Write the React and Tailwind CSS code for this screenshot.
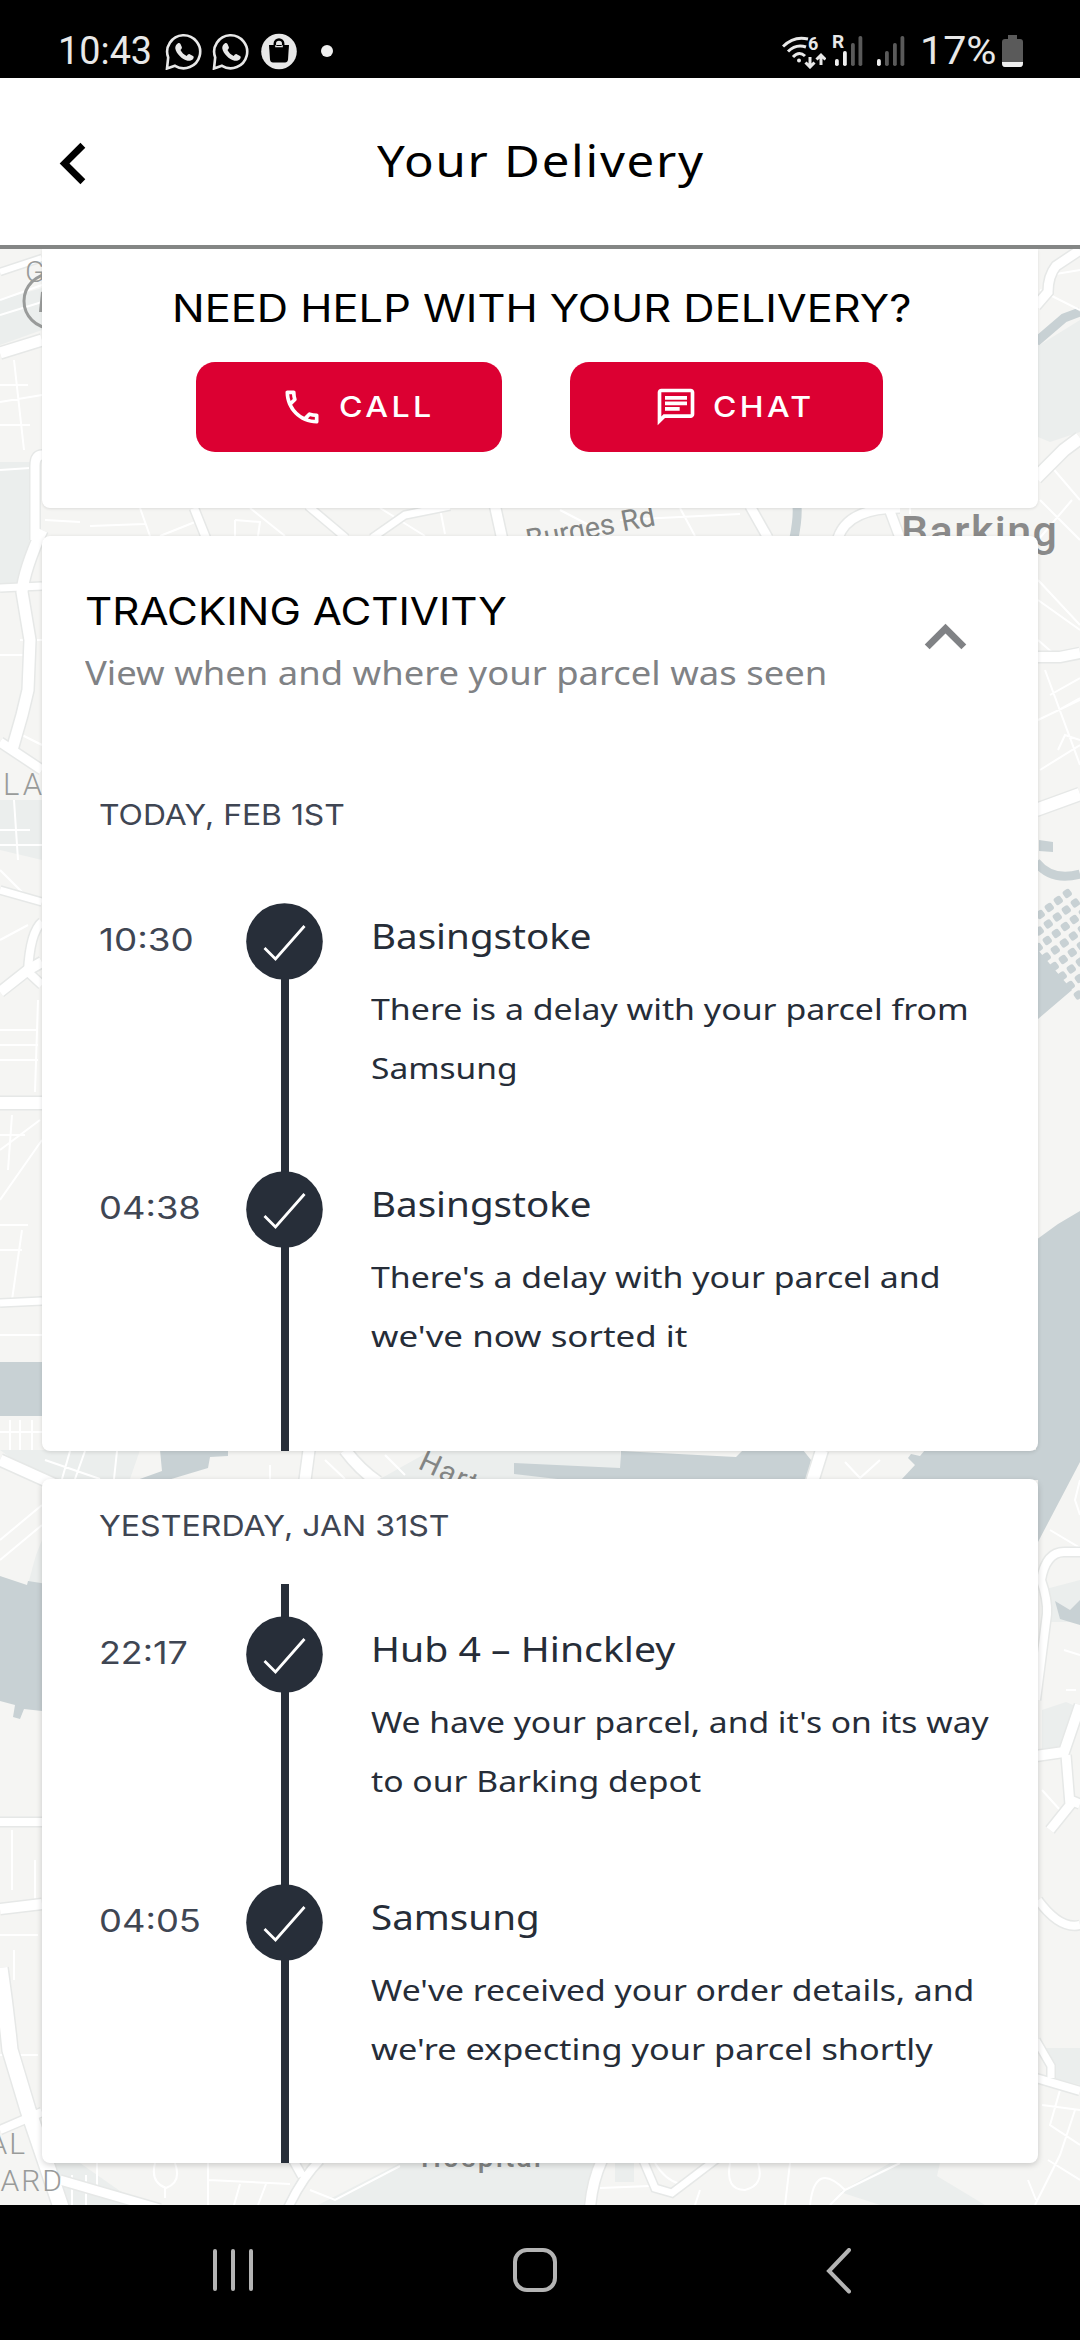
import { useLayoutEffect, useRef, useState } from "react";
import {
  MdKeyboardArrowLeft,
  MdKeyboardArrowUp,
  MdOutlineCall,
  MdOutlineChat,
} from "react-icons/md";

// A single line of text, widened or narrowed to the given width.
function Fit({ width, className = "", children }) {
  const ref = useRef(null);
  const [scale, setScale] = useState(1);
  useLayoutEffect(() => {
    setScale(width / ref.current.offsetWidth);
  }, [width]);
  return (
    <span
      ref={ref}
      className={"inline-block shrink-0 origin-left whitespace-nowrap " + className}
      style={{ transform: `scaleX(${scale})` }}
    >
      {children}
    </span>
  );
}

function SignalBars({ lit }) {
  return (
    <svg width="28" height="32" viewBox="0 0 28 32" className="shrink-0">
      {[
        [0, 24],
        [8, 16],
        [16, 8],
        [23.5, 1],
      ].map(([x, y], i) => (
        <rect key={x} x={x} y={y} width="3.8" height={31 - y} rx="1.8" fill={i < lit ? "#f0f0f0" : "#5a5a5a"} />
      ))}
    </svg>
  );
}

function StatusBar() {
  return (
    <div className="relative z-10 flex h-[78px] w-full items-start justify-between bg-black pt-8 text-[#e8e8e8]">
      <div className="flex h-[38px] items-center pl-[58px]">
        <div className="flex w-[107px] text-[39px] leading-[38px]">
          <Fit width={94} className="font-['Roboto',sans-serif]">10:43</Fit>
        </div>
        <WhatsAppIcon />
        <div className="w-[9px]" />
        <WhatsAppIcon />
        <svg width="38" height="38" viewBox="0 0 38 38" className="ml-2.5">
          <circle cx="19" cy="19.5" r="17.8" fill="#e8e8e8" />
          <path d="M9 13h20l-1 14.500q-.3 3-3 3H13q-2.700 0-3-3Z" fill="#000" />
          <path d="M14.800 14v-2.500a4.200 4 0 0 1 8.400 0V14" fill="none" stroke="#000" strokeWidth="2.500" />
          <path d="M15.800 13.200v1.500h6.400v-1.500" fill="none" stroke="#e8e8e8" strokeWidth="1.200" />
        </svg>
        <div className="ml-[23px] size-3 rounded-full bg-[#f0f0f0]" />
      </div>
      <div className="flex h-[38px] items-center pr-[57px]">
        <svg width="44" height="36" viewBox="0 0 44 36" fill="none" stroke="#e8e8e8" strokeWidth="3">
          <path d="M1 13.500Q12 2.500 26 6" />
          <path d="M6 18.500Q14 10.500 24 14" />
          <path d="M11 24Q17 17.500 23 23" />
          <circle cx="17" cy="27.500" r="2" fill="#e8e8e8" stroke="none" />
          <path d="M28 24v10m-4.500-4.500L28 34l4.500-4.500M39 32V22m-4.500 4.500L39 22l4.500 4.500" />
          <text x="26" y="17" fontSize="18" fontWeight="700" fontFamily="Roboto, sans-serif" fill="#e8e8e8" stroke="none">
            6
          </text>
        </svg>
        <div className="relative ml-[9px] flex h-8">
          <SignalBars lit={2} />
          <span className="absolute -left-[3px] -top-[1px] bg-black font-['Roboto',sans-serif] text-[19px] font-bold leading-[15px]">
            R
          </span>
        </div>
        <div className="ml-3.5 flex h-8">
          <SignalBars lit={1} />
        </div>
        <div className="ml-[15px] flex w-[82px] text-[39px] leading-[38px]">
          <Fit width={76} className="font-['Roboto',sans-serif]">17%</Fit>
        </div>
        <svg width="21" height="34" viewBox="0 0 21 34">
          <path d="M6 1h9v4h3q3 0 3 3v21q0 4-3 4H3q-3 0-3-4V8q0-3 3-3h3Z" fill="#5a5a5a" />
          <path d="M0 28h21v1q0 4-3 4H3q-3 0-3-4Z" fill="#f0f0f0" />
        </svg>
      </div>
    </div>
  );
}

function WhatsAppIcon() {
  return (
    <svg width="38" height="38" viewBox="0 0 38 38">
      <path d="M2 36.500l1.200-11A16.500 16.500 0 1 1 10 33.800Z" fill="none" stroke="#e8e8e8" strokeWidth="2.600" />
      <path
        d="M13 11.200c1-.6 2-.3 2.500.9l1.300 3c.4 1-.2 1.800-1.300 3 1.300 2.600 3.200 4.500 6.200 5.800 1-1.200 1.900-2.200 3-1.700l3.300 1.700c1 .6.800 1.800.2 2.800-1.200 1.800-3.600 2.500-5.700 2-5.500-1.400-11.200-6.800-12.200-12.200-.3-2.200.9-4.400 2.700-5.300Z"
        fill="#e8e8e8"
      />
    </svg>
  );
}

function Header() {
  return (
    <header className="relative z-10 flex h-[171px] w-full items-start border-b-4 border-[#848685] bg-white text-black">
      <MdKeyboardArrowLeft className="ml-[32px] mt-[44px] size-[83px]" />
      <h1 className="ml-[262px] mt-[53px] flex h-[60px] items-center text-[43px] leading-[60px] tracking-[1.5px]">
        <Fit width={328}>Your Delivery</Fit>
      </h1>
    </header>
  );
}

const roads = [
  ["M0 272 42 258", 6], ["M0 353 42 340", 11], ["M42 455Q35 455 35 466V540", 9],
  ["M42 530Q24 570 22 592L30 640 28 690 22 715 12 750", 11], ["M0 588 42 586", 7], ["M0 742 42 770", 9],
  ["M0 890 42 902", 7], ["M42 922Q30 932 28 972L42 985", 8], ["M0 992 28 970 42 962", 10],
  ["M0 1103H42", 12], ["M0 1303 42 1301", 7], ["M0 1460 60 1487", 11], ["M0 1822H42", 8],
  ["M0 1909 42 1904", 10], ["M0 1968Q6 2010 10 2050L28 2110 62 2210", 15], ["M0 2130 42 2112", 8],
  ["M60 2180 160 2209", 9], ["M194 508 206 538", 8], ["M308 506 346 538", 7], ["M372 538 405 515 450 506", 7],
  ["M495 506 502 538", 10], ["M750 506 768 538", 9], ["M838 538Q848 508 900 508", 9], ["M888 506 900 538", 9],
  ["M1080 250 1056 266Q1048 276 1048 292L1036 306", 9], ["M1036 478 1064 450 1080 438", 12],
  ["M1038 657H1060L1080 653", 10], ["M1036 810 1080 794", 12], ["M309 1450 305 1480", 11],
  ["M345 1450Q360 1470 378 1482", 11], ["M822 1450 812 1482", 12],
  ["M1080 1552H1064Q1046 1552 1041 1580 1048 1600 1047 1614L1036 1700", 8], ["M1036 1756 1064 1752 1080 1705", 10],
  ["M1066 1755 1070 1805 1050 1830M1070 1800 1080 1804", 9], ["M1036 2040 1051 2066V2078", 7], ["M1036 2078 1080 2091", 8],
  ["M292 2158 302 2176M320 2160Q302 2178 288 2208", 8], ["M602 2160Q592 2182 590 2208", 10],
  ["M643 2160 655 2188 672 2193 718 2158", 7], ["M1038 1900Q1060 1930 1080 1925", 8],
];

const lanes =
  "M0 300 42 285M0 315 42 302M14 360 24 450M0 385H28M0 402 42 395M0 425H30M0 470 30 468M20 640H42M0 655H24M22 735 42 745M0 830H30M0 845H42M14 800 18 860M0 870 30 900M0 940 28 925M0 1030H38M0 1045H38M0 1060H38M38 1000 35 1092M0 1135H25M0 1150 40 1120M12 1115 8 1170M0 1200 42 1140M0 1225H28M22 1230 12 1300M0 1250H22M0 1335H42M10 1420V1450M20 1420V1450M32 1420V1450M0 1432H42M0 1540 42 1505M0 1560 42 1525M12 1830V1890M35 1860V1900M0 1935H38M14 1950V1980M0 2055H38M42 508M45 520 80 522M90 526 145 524M140 508 150 536M160 536 200 520M235 520V536M235 520 260 522 258 536M250 508 285 536M380 508 425 536M440 508 445 534M560 510 610 536M680 508 695 536M620 520 740 514M910 508V514M1040 290 1080 310M1050 275 1080 270M1040 500 1080 540M1050 465 1080 500M1038 540 1072 500M1038 580 1080 625M1038 600 1080 630M1038 640 1055 655M1045 670 1080 765M1050 695 1080 678M1055 712 1080 698M1038 720 1080 700M1058 750 1065 735 1080 740M1040 770 1080 745M70 1451 62 1479M85 1451 75 1479M45 1460 100 1479M117 1451 114 1479M270 1465V1479M325 1460 345 1479M385 1455 405 1475M845 1462 860 1478 880 1460M1080 1480 1075 1500 1080 1515M1050 1530 1080 1548M1064 1650 1080 1655M1066 1690H1076M1042 1790 1060 1810M1042 2105 1080 2110M1060 2090 1050 2125 1080 2145M1075 2110 1060 2155 1035 2205M1048 2160 1080 2180M1028 2180 1036 2200M72 2175V2205M86 2175V2205M97 2163V2185M155 2163Q150 2182 166 2188 182 2182 175 2163M165 2188V2198M208 2163V2205M208 2180 290 2184M240 2184 234 2205M266 2184 258 2205M310 2190 335 2200 400 2166M600 2188 650 2186M655 2163Q665 2180 680 2184M700 2190 695 2205M730 2163Q725 2190 745 2190 765 2185 758 2163M790 2163 785 2205M810 2205Q815 2160 845 2190L900 2163M830 2205 845 2190";

// Grid of small tanks beside the river.
const tanks = [];
for (let r = 0; r < 9; r++) for (let c = 0; c < 6; c++) tanks.push([1067 - c * 9 + r * 8, 890 + c * 7 + r * 9.5]);

function MapBackground() {
  return (
    <svg className="absolute inset-0 size-full" viewBox="0 249 1080 1956" fontFamily="Roboto, sans-serif">
      <rect y="249" width="1080" height="1956" fill="#f5f5f3" />
      <g fill="#ebeeed">
        <path d="M0 462 30 462V540L22 588H0ZM0 300 42 288V330L0 345ZM1038 346 1080 320V432L1050 442 1038 437Z" />
        <path d="M0 800H42V860L0 850ZM0 1450H140L130 1479H40ZM430 1451H620V1479H380ZM1042 1590 1080 1580V1622H1048Z" />
        <path d="M36 1555 42 1540V1584H28ZM1042 1710 1066 1702 1080 1708 1066 1745 1042 1750ZM1042 2048H1080V2085L1052 2078Z" />
        <path d="M318 2205 400 2163H600L588 2205ZM840 2192 890 2163H940L937 2176 985 2205H880ZM615 2163H634V2182H615ZM45 2163H80L140 2205H60Z" />
      </g>
      <g fill="#c8d1d4">
        <path d="M0 1362H42V1416H0ZM0 1576 27 1585 28 1581 60 1586V1713L24 1709 20 1719 13 1717 15 1705 0 1701Z" />
        <path d="M160 1450 162 1471 137 1480H168L208 1468 210 1457 228 1456V1450Z" />
        <path d="M514 1463 620 1468 621 1451 736 1457 743 1450H803L811 1460 807 1480H566L514 1474Z" />
        <path d="M925 1450 920 1456 911 1454 908 1458 915 1465 901 1480H1038V1542L1080 1462V1211L1058 1224 1036 1240V1450Z" />
        <path d="M1038 950 1072 990 1038 1019ZM1039 840 1053 842V852L1039 851ZM1055 1601 1070 1610 1080 1600V1625L1060 1619Z" />
        {tanks.map(([x, y]) => (
          <rect key={x + "-" + y} x={x - 4} y={y - 0.5} width="8" height="8" rx="2.500" transform={`rotate(-35 ${x} ${y + 3})`} />
        ))}
      </g>
      <g fill="none" stroke="#c8d1d4" strokeWidth="9">
        <path d="M1036 342 1064 318 1080 312M1036 862Q1052 882 1080 874M797 506Q798 518 794 538" />
      </g>
      <path d={lanes} fill="none" stroke="#ffffff" strokeWidth="2" />
      {roads.map(([d, w]) => (
        <path key={d} d={d} fill="none" stroke="#e6e8e7" strokeWidth={w + 3} />
      ))}
      {roads.map(([d, w]) => (
        <path key={d} d={d} fill="none" stroke="#ffffff" strokeWidth={w} />
      ))}
      <g fill="#999b9a">
        <text x="25" y="282" fontSize="29" fontWeight="300">G</text>
        <circle cx="51" cy="301" r="27" fill="none" stroke="#999b9a" strokeWidth="3" />
        <path d="M39 312 41 292 46 290V312Z" />
        <text x="3" y="795" fontSize="31" fontWeight="300" letterSpacing="3">LA</text>
        <text x="27" y="2154" fontSize="30" fontWeight="300" letterSpacing="2" textAnchor="end">AL</text>
        <text x="64" y="2191" fontSize="30" fontWeight="300" letterSpacing="2" textAnchor="end">ARD</text>
      </g>
      <g fill="#838584">
        <text x="528" y="550" fontSize="29" textLength="131" transform="rotate(-11 528 550)">Burges Rd</text>
        <text x="901" y="546" fontSize="43" fontWeight="500" fill="#8a8a8a" textLength="156">Barking</text>
        <text x="417" y="1468" fontSize="29" letterSpacing="1.500" transform="rotate(25 417 1468)">Hartn</text>
        <text x="421" y="2167" fontSize="28" fontWeight="500" textLength="120">Hospital</text>
      </g>
    </svg>
  );
}

function ActionButton({ icon: Icon, label, labelWidth, className }) {
  return (
    <button className={"flex h-[90px] items-center rounded-[19px] bg-[#dc0032] text-white " + className}>
      <Icon className="size-[44px] shrink-0" />
      <span className="ml-[15px] flex font-['Inter',sans-serif] text-[28.5px] font-medium leading-[44px] tracking-[3px]">
        <Fit width={labelWidth}>{label}</Fit>
      </span>
    </button>
  );
}

function HelpCard() {
  return (
    <section className="h-[259px] rounded-b-lg bg-white pt-8 shadow-[0_1px_3px_rgba(0,0,0,0.1)]">
      <h2 className="flex h-[53px] pl-[130px] font-['Inter',sans-serif] text-[37.5px] leading-[56px] text-black">
        <Fit width={739}>NEED HELP WITH YOUR DELIVERY?</Fit>
      </h2>
      <div className="mt-7 flex pl-[154px]">
        <ActionButton icon={MdOutlineCall} label="CALL" labelWidth={96} className="w-[306px] pl-[84px]" />
        <ActionButton icon={MdOutlineChat} label="CHAT" labelWidth={101} className="ml-[68px] w-[313px] pl-[84px]" />
      </div>
    </section>
  );
}

function Event({ time, timeWidth, place, placeWidth, lines, first }) {
  return (
    <li className="flex h-[268px]">
      <div className="flex w-[147px] shrink-0 pt-[46px] font-['Inter',sans-serif] text-[31px] leading-[46px] text-[#3f4653]">
        <Fit width={timeWidth}>{time}</Fit>
      </div>
      <div className="flex w-[85px] shrink-0 flex-col">
        <div className={"-mb-px ml-[35px] h-[33px] w-2 shrink-0 " + (first ? "bg-transparent" : "bg-[#272e39]")} />
        <svg width="77" height="77" viewBox="0 0 77 77" className="shrink-0">
          <circle cx="38.500" cy="38.500" r="38.300" fill="#272e39" />
          <path d="M18.500 45 29.500 56 58.500 23" fill="none" stroke="#ffffff" strokeWidth="2.800" />
        </svg>
        <div className="-mt-0.5 ml-[35px] w-2 grow bg-[#272e39]" />
      </div>
      <div className="ml-10 text-[#262d38]">
        <h3 className="mt-10 flex h-[50px] text-[34px] leading-[50px]">
          <Fit width={placeWidth}>{place}</Fit>
        </h3>
        <div className="mt-[19px] text-[28.5px] leading-[59px]">
          {lines.map(([text, width]) => (
            <div key={text} className="flex h-[59px]">
              <Fit width={width}>{text}</Fit>
            </div>
          ))}
        </div>
      </div>
    </li>
  );
}

function Day({ label, labelWidth, labelClass, events, firstOpen }) {
  return (
    <div className="flex grow flex-col pl-[57px]">
      <div className={"flex h-11 font-['Inter',sans-serif] text-[29px] leading-[45px] text-[#3f4653] " + labelClass}>
        <Fit width={labelWidth}>{label}</Fit>
      </div>
      <ul>
        {events.map((e, i) => (
          <Event key={e.time} {...e} first={firstOpen && i === 0} />
        ))}
      </ul>
      <div className="ml-[182px] w-2 grow bg-[#272e39]" />
    </div>
  );
}

const today = [
  {
    time: "10:30", timeWidth: 95, place: "Basingstoke", placeWidth: 221,
    lines: [["There is a delay with your parcel from", 598], ["Samsung", 147]],
  },
  {
    time: "04:38", timeWidth: 102, place: "Basingstoke", placeWidth: 221,
    lines: [["There's a delay with your parcel and", 569], ["we've now sorted it", 316]],
  },
];

const yesterday = [
  {
    time: "22:17", timeWidth: 89, place: "Hub 4 – Hinckley", placeWidth: 304,
    lines: [["We have your parcel, and it's on its way", 618], ["to our Barking depot", 330]],
  },
  {
    time: "04:05", timeWidth: 102, place: "Samsung", placeWidth: 169,
    lines: [["We've received your order details, and", 603], ["we're expecting your parcel shortly", 562]],
  },
];

function NavBar() {
  return (
    <nav className="relative z-10 flex h-[135px] items-start bg-black pt-[43px]">
      <svg width="42" height="44" viewBox="0 0 42 44" className="ml-[212px]">
        <path d="M3 3V41M21 3V41M39 3V41" stroke="#b4b4b4" strokeWidth="4" strokeLinecap="round" />
      </svg>
      <div className="ml-[259px] size-11 rounded-[14px] border-4 border-[#b4b4b4]" />
      <svg width="26" height="46" viewBox="0 0 26 46" className="ml-[268px]">
        <path d="M24 2 4 23 24 43.500" fill="none" stroke="#b4b4b4" strokeWidth="4" strokeLinecap="round" />
      </svg>
    </nav>
  );
}

export default function App() {
  return (
    <div className="flex h-[2340px] w-[1080px] flex-col overflow-hidden bg-white font-['Noto_Sans','Open_Sans',sans-serif]">
      <StatusBar />
      <Header />
      <main className="relative h-[1956px] shrink-0 overflow-hidden">
        <MapBackground />
        <div className="relative mx-[42px] flex flex-col gap-7">
          <HelpCard />
          <section className="flex h-[915px] flex-col rounded-lg bg-white shadow-[0_1px_4px_rgba(0,0,0,0.13)]">
            <div className="flex h-[230px] justify-between pl-[43px] pr-[51px] pt-[46px]">
              <div>
                <h2 className="flex h-14 font-['Inter',sans-serif] text-[38.5px] leading-[59px] text-black">
                  <Fit width={422}>TRACKING ACTIVITY</Fit>
                </h2>
                <p className="mt-[11px] flex h-12 text-[32px] leading-[48px] text-[#808285]">
                  <Fit width={742}>View when and where your parcel was seen</Fit>
                </p>
              </div>
              <MdKeyboardArrowUp className="mt-[14px] size-[83px] text-[#808285]" />
            </div>
            <Day label="TODAY, FEB 1ST" labelWidth={246} labelClass="mt-[26px] mb-[35px]" events={today} firstOpen />
          </section>
          <section className="flex h-[684px] flex-col rounded-lg bg-white shadow-[0_2px_6px_rgba(0,0,0,0.18)]">
            <Day label="YESTERDAY, JAN 31ST" labelWidth={351} labelClass="mt-6 mb-[37px]" events={yesterday} />
          </section>
        </div>
      </main>
      <NavBar />
    </div>
  );
}
